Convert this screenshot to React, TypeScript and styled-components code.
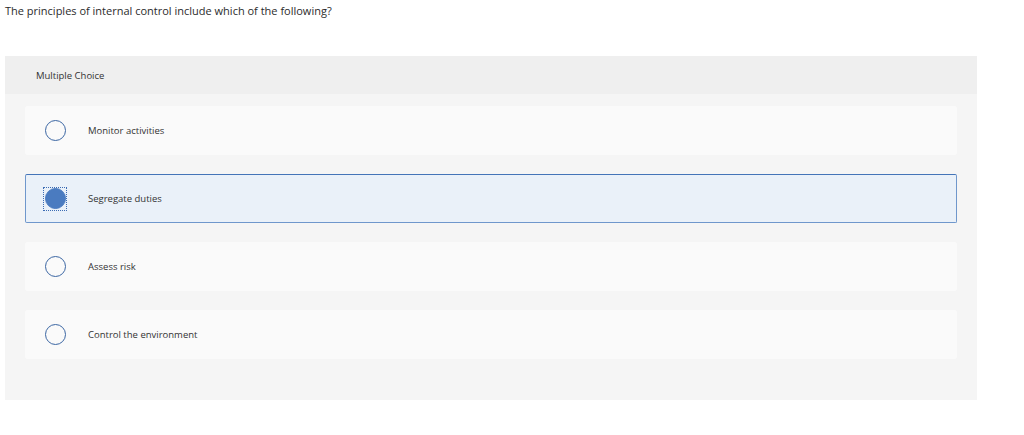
import React from "react";
import styled, { createGlobalStyle } from "styled-components";

const Global = createGlobalStyle`
  html, body { margin: 0; padding: 0; background: #fff; }
  body { font-family: "Open Sans", "Liberation Sans", Arial, sans-serif; color: #333; }
`;

const Page = styled.div`
  width: 1024px;
  padding: 3px 0 0 5px;
  box-sizing: border-box;
`;

const Question = styled.p`
  margin: 0;
  font-size: 11px;
  line-height: 15px;
  color: #2b2b2b;
`;

const Panel = styled.section`
  margin-top: 38px;
  width: 972px;
  background: #f5f5f5;
  padding-bottom: 41px;
`;

const Header = styled.div`
  height: 38px;
  background: #efefef;
  display: flex;
  align-items: center;
  padding-left: 31px;
  font-size: 9.5px;
  color: #333;
`;

const List = styled.div`
  display: flex;
  flex-direction: column;
  gap: 19px;
  padding: 12px 20px 0 20px;
`;

const Card = styled.label<{ $selected?: boolean }>`
  display: flex;
  align-items: center;
  height: 49px;
  box-sizing: border-box;
  padding-left: 17px;
  border-radius: 2px;
  background: ${(p) => (p.$selected ? "#eaf1f9" : "#fafafa")};
  border: 1px solid ${(p) => (p.$selected ? "#6f97cc" : "#fafafa")};
  border-top-color: ${(p) => (p.$selected ? "#4474b8" : "#fafafa")};
`;

const RadioWrap = styled.span<{ $focused?: boolean }>`
  width: 24px;
  height: 24px;
  box-sizing: border-box;
  display: flex;
  align-items: center;
  justify-content: center;
  outline: ${(p) => (p.$focused ? "1px dotted #3c6cb4" : "none")};
  outline-offset: -1px;
`;

const Radio = styled.span<{ $checked?: boolean }>`
  width: 21px;
  height: 21px;
  box-sizing: border-box;
  border-radius: 50%;
  border: 1px solid #3b66a3;
  background: ${(p) => (p.$checked ? "#4a7bc0" : "transparent")};
  ${(p) => (p.$checked ? "border-color: #4a7bc0;" : "")}
`;

const OptionText = styled.span`
  margin-left: 21px;
  font-size: 9.5px;
  line-height: 13px;
  color: #333;
`;

const options = [
  "Monitor activities",
  "Segregate duties",
  "Assess risk",
  "Control the environment",
];

export default function App() {
  const selected = 1;
  return (
    <Page>
      <Global />
      <Question>The principles of internal control include which of the following?</Question>
      <Panel>
        <Header>Multiple Choice</Header>
        <List>
          {options.map((o, i) => (
            <Card key={o} $selected={i === selected}>
              <RadioWrap $focused={i === selected}>
                <Radio $checked={i === selected} />
              </RadioWrap>
              <OptionText>{o}</OptionText>
            </Card>
          ))}
        </List>
      </Panel>
    </Page>
  );
}
